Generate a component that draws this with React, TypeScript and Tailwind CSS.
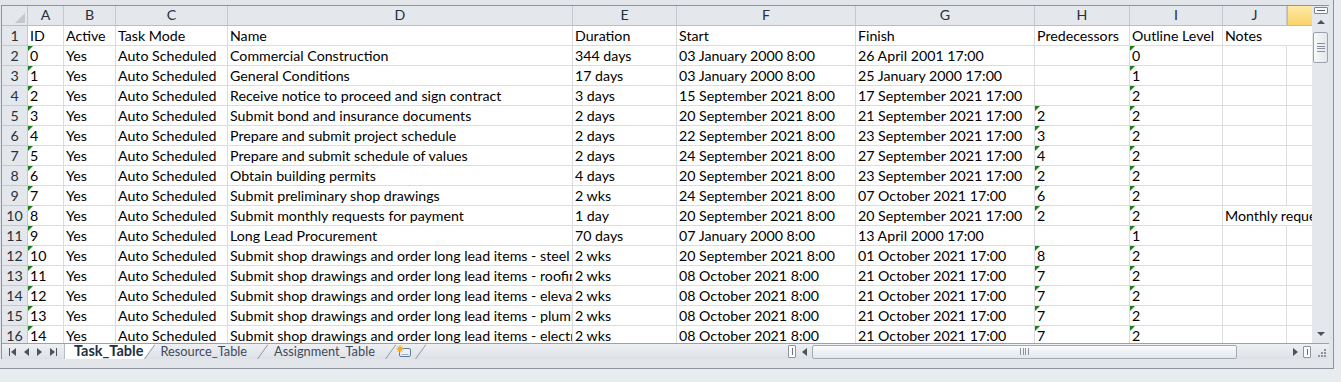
import * as React from 'react';

const colWidths = ['w-[36px]', 'w-[52px]', 'w-[112px]', 'w-[345px]', 'w-[104px]', 'w-[179px]', 'w-[179px]', 'w-[95px]', 'w-[93px]', 'w-[64px]'];
const colLetters = ['A', 'B', 'C', 'D', 'E', 'F', 'G', 'H', 'I', 'J'];
// columns holding numbers stored as text get the little green flag
const flagCols = [0, 7, 8];

const header = ['ID', 'Active', 'Task Mode', 'Name', 'Duration', 'Start', 'Finish', 'Predecessors', 'Outline Level', 'Notes'];

const tasks: string[][] = [
  ['0', 'Commercial Construction', '344 days', '03 January 2000 8:00', '26 April 2001 17:00', '', '0', ''],
  ['1', 'General Conditions', '17 days', '03 January 2000 8:00', '25 January 2000 17:00', '', '1', ''],
  ['2', 'Receive notice to proceed and sign contract', '3 days', '15 September 2021 8:00', '17 September 2021 17:00', '', '2', ''],
  ['3', 'Submit bond and insurance documents', '2 days', '20 September 2021 8:00', '21 September 2021 17:00', '2', '2', ''],
  ['4', 'Prepare and submit project schedule', '2 days', '22 September 2021 8:00', '23 September 2021 17:00', '3', '2', ''],
  ['5', 'Prepare and submit schedule of values', '2 days', '24 September 2021 8:00', '27 September 2021 17:00', '4', '2', ''],
  ['6', 'Obtain building permits', '4 days', '20 September 2021 8:00', '23 September 2021 17:00', '2', '2', ''],
  ['7', 'Submit preliminary shop drawings', '2 wks', '24 September 2021 8:00', '07 October 2021 17:00', '6', '2', ''],
  ['8', 'Submit monthly requests for payment', '1 day', '20 September 2021 8:00', '20 September 2021 17:00', '2', '2', 'Monthly requests for payment'],
  ['9', 'Long Lead Procurement', '70 days', '07 January 2000 8:00', '13 April 2000 17:00', '', '1', ''],
  ['10', 'Submit shop drawings and order long lead items - steel', '2 wks', '20 September 2021 8:00', '01 October 2021 17:00', '8', '2', ''],
  ['11', 'Submit shop drawings and order long lead items - roofing', '2 wks', '08 October 2021 8:00', '21 October 2021 17:00', '7', '2', ''],
  ['12', 'Submit shop drawings and order long lead items - elevators', '2 wks', '08 October 2021 8:00', '21 October 2021 17:00', '7', '2', ''],
  ['13', 'Submit shop drawings and order long lead items - plumbing', '2 wks', '08 October 2021 8:00', '21 October 2021 17:00', '7', '2', ''],
  ['14', 'Submit shop drawings and order long lead items - electrical', '2 wks', '08 October 2021 8:00', '21 October 2021 17:00', '7', '2', ''],
];

const rows: string[][] = [header, ...tasks.map(t => [t[0], 'Yes', 'Auto Scheduled', ...t.slice(1)])];

function Cell({ w, text, flag, spill }: { w: string; text: string; flag: boolean; spill: boolean }) {
  return (
    <div className={`relative shrink-0 ${w} h-[20px] border-b border-[#dadcdd] pl-[2px] leading-[19px] whitespace-nowrap ${spill ? 'overflow-visible z-10 border-r border-r-transparent' : 'overflow-hidden border-r'}`}>
      {flag && <span className="absolute left-0 top-0 h-0 w-0 border-t-[5px] border-r-[5px] border-t-[#1b7d1b] border-r-transparent" />}
      {text}
    </div>
  );
}

function Tri({ dir }: { dir: 'l' | 'r' | 'u' | 'd' }) {
  if (dir === 'l') return <svg width="5" height="8" viewBox="0 0 5 8"><path d="M5 0 L0 4 L5 8 Z" fill="#4d535b" /></svg>;
  if (dir === 'r') return <svg width="5" height="8" viewBox="0 0 5 8"><path d="M0 0 L5 4 L0 8 Z" fill="#4d535b" /></svg>;
  if (dir === 'u') return <svg width="8" height="4" viewBox="0 0 8 4"><path d="M0 4 L4 0 L8 4 Z" fill="#4d535b" /></svg>;
  return <svg width="8" height="4" viewBox="0 0 8 4"><path d="M0 0 L4 4 L8 0 Z" fill="#4d535b" /></svg>;
}

function Slash({ fill }: { fill?: boolean }) {
  return (
    <svg width="11" height="15" viewBox="0 0 11 15" className="shrink-0">
      {fill && <path d="M0 0 L11 0 L0 15 Z" fill="#ffffff" />}
      <path d="M11 0.5 L0.5 15" stroke="#8f97a1" strokeWidth="1" fill="none" />
    </svg>
  );
}

export default function App() {
  return (
    <div className="h-[382px] w-[1341px] overflow-hidden bg-[#e9ecef] font-[Lato,'Liberation_Sans',sans-serif] text-[14.2px] text-black">
      <div className="h-[369px] w-[1334px] border-r border-b border-[#8e949b] bg-[#e2e6eb] pt-[5px] pb-[9px] pl-px pr-[4px]">
        <div className="flex h-[354px] flex-col border-l border-t border-[#8e949b] bg-white">
          <div className="flex h-[337px]">
            {/* sheet grid */}
            <div className="w-[1310px] overflow-hidden">
              <div className="flex h-[20px] border-b border-[#b7bdc5] bg-[#e4e7ec] text-[#27303c]">
                <div className="flex w-[26px] shrink-0 items-end justify-end border-r border-[#c2c7ce] pb-[2px] pr-[2px]">
                  <svg width="10" height="10" viewBox="0 0 10 10"><path d="M10 0 L10 10 L0 10 Z" fill="#c3c8ce" /></svg>
                </div>
                {colLetters.map((l, i) => (
                  <div key={l} className={`${colWidths[i]} shrink-0 border-r border-[#c5c9cf] text-center leading-[17px]`}>{l}</div>
                ))}
                <div className="flex-1 bg-gradient-to-b from-[#fee8a4] to-[#f9d466] shadow-[inset_1px_0_0_#eeb54f]" />
              </div>
              {rows.map((r, ri) => (
                <div key={ri} className="flex">
                  <div className="h-[20px] w-[26px] shrink-0 border-r border-b border-[#c5cad0] bg-[#e4e7ec] text-center leading-[19px] text-[#27303c]">{ri + 1}</div>
                  {r.map((v, ci) => (
                    <Cell key={ci} w={colWidths[ci]} text={v} flag={ri > 0 && flagCols.includes(ci) && v !== ''} spill={ci === 9 && v !== ''} />
                  ))}
                  <div className="h-[20px] flex-1 border-b border-[#dadcdd]" />
                </div>
              ))}
            </div>
            {/* vertical scrollbar */}
            <div className="flex w-[17px] shrink-0 flex-col items-center bg-[#e4e8ec]">
              <div className="mt-px flex h-[7px] w-[14px] items-center justify-center rounded-[1px] border border-[#7f868f] bg-[#f7f8fa]">
                <div className="h-px w-[8px] bg-[#59606a]" />
              </div>
              <div className="flex h-[16px] items-center justify-center"><Tri dir="u" /></div>
              <div className="mt-[2px] flex h-[31px] w-[15px] flex-col items-center justify-center gap-[1.5px] rounded-[2px] border border-[#9aa2ac] bg-gradient-to-r from-[#f8f9fb] to-[#e3e7ec]">
                <div className="h-px w-[8px] bg-[#8a919b]" />
                <div className="h-px w-[8px] bg-[#8a919b]" />
                <div className="h-px w-[8px] bg-[#8a919b]" />
                <div className="h-px w-[8px] bg-[#8a919b]" />
              </div>
              <div className="flex-1" />
              <div className="flex h-[16px] items-center justify-center pb-[2px]"><Tri dir="d" /></div>
            </div>
          </div>
          {/* sheet tabs + horizontal scrollbar */}
          <div className="flex h-[16px] border-t border-[#9aa1aa] bg-gradient-to-b from-[#eef0f3] to-[#dde1e6]">
            <div className="flex w-[63px] shrink-0 items-center justify-around border-r border-[#b7bdc5] px-[3px]">
              <div className="flex items-center gap-px"><div className="h-[8px] w-px bg-[#4d535b]" /><Tri dir="l" /></div>
              <Tri dir="l" />
              <Tri dir="r" />
              <div className="flex items-center gap-px"><Tri dir="r" /><div className="h-[8px] w-px bg-[#4d535b]" /></div>
            </div>
            <div className="flex w-[723px] shrink-0 items-start leading-[13px]">
              <div className="h-full bg-white pl-[9px] pr-px text-[14.5px] font-bold text-[#22303f]">Task_Table</div>
              <Slash fill />
              <div className="h-full pl-[5px] pr-[10px] text-[12.8px] leading-[14px] text-[#3d4a5b]">Resource_Table</div>
              <Slash />
              <div className="h-full pl-[6px] pr-[10px] text-[12.8px] leading-[14px] text-[#3d4a5b]">Assignment_Table</div>
              <Slash />
              <div className="flex h-full items-center pr-[3px]">
                <svg width="16" height="13" viewBox="0 0 16 13">
                  <rect x="3.5" y="3.5" width="11" height="8" rx="1.5" fill="#eef2f6" stroke="#5f7d9b" />
                  <path d="M5.5 9.5 H12.5" stroke="#9bb0c4" />
                  <circle cx="4" cy="4" r="2.4" fill="#f4b73b" />
                  <path d="M4 0 V8 M0 4 H8 M1.2 1.2 L6.8 6.8 M6.8 1.2 L1.2 6.8" stroke="#f0a928" strokeWidth="0.9" />
                </svg>
              </div>
              <Slash />
            </div>
            <div className="flex w-[524px] shrink-0 items-center">
              <div className="flex h-[13px] w-[8px] shrink-0 items-center justify-center rounded-[1px] border border-[#8e959e] bg-[#fbfcfd]">
                <div className="h-[7px] w-px bg-[#6b727c]" />
              </div>
              <div className="flex h-full w-[16px] shrink-0 items-center justify-center"><Tri dir="l" /></div>
              <div className="flex h-full w-[476px] shrink-0 items-center">
                <div className="flex h-[14px] w-[425px] items-center justify-center gap-[1.5px] rounded-[2px] border border-[#a3aab3] bg-gradient-to-b from-[#fbfcfd] to-[#e2e6eb]">
                  <div className="h-[7px] w-px bg-[#8a919b]" />
                  <div className="h-[7px] w-px bg-[#8a919b]" />
                  <div className="h-[7px] w-px bg-[#8a919b]" />
                  <div className="h-[7px] w-px bg-[#8a919b]" />
                </div>
              </div>
              <div className="flex h-full w-[15px] shrink-0 items-center justify-center"><Tri dir="r" /></div>
              <div className="flex h-[12px] w-[8px] shrink-0 items-center justify-center rounded-[1px] border border-[#8e959e] bg-[#fbfcfd]">
                <div className="h-[6px] w-px bg-[#6b727c]" />
              </div>
              <div className="w-px" />
            </div>
            <div className="flex w-[17px] shrink-0 items-end justify-end pb-[2px] pr-[3px]">
              <svg width="9" height="9" viewBox="0 0 9 9">
                <rect x="7" y="1" width="2" height="2" fill="#8d949d" />
                <rect x="4" y="4" width="2" height="2" fill="#8d949d" />
                <rect x="7" y="4" width="2" height="2" fill="#8d949d" />
                <rect x="1" y="7" width="2" height="2" fill="#8d949d" />
                <rect x="4" y="7" width="2" height="2" fill="#8d949d" />
                <rect x="7" y="7" width="2" height="2" fill="#8d949d" />
              </svg>
            </div>
          </div>
        </div>
      </div>
    </div>
  );
}
